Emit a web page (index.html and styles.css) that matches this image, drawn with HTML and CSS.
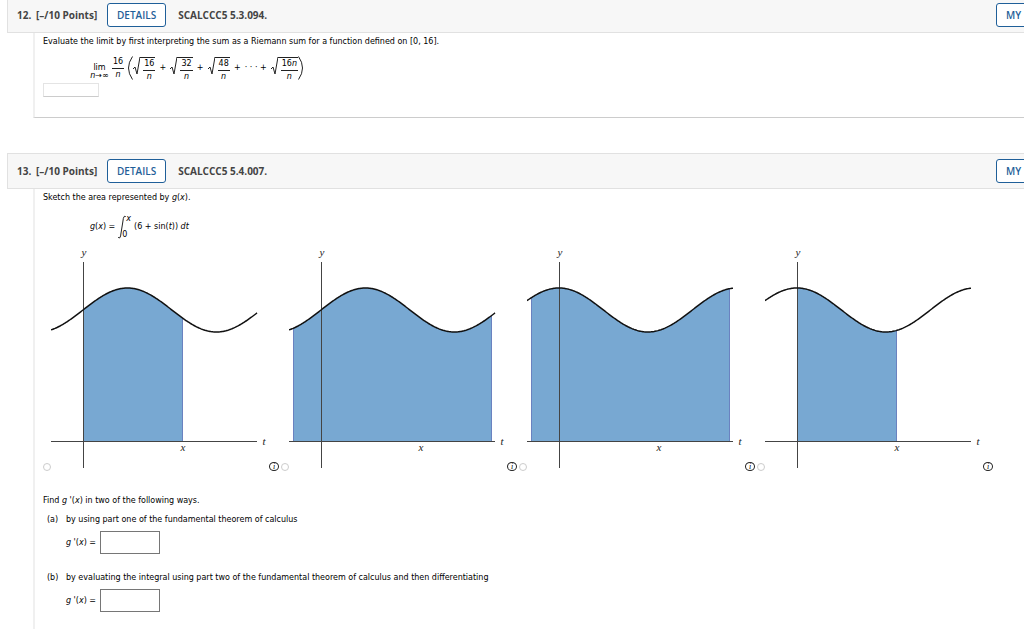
FILE: index.html
```
<!DOCTYPE html>
<html lang="en">
<head>
    <meta charset="UTF-8">
    <meta name="viewport" content="width=device-width, initial-scale=1.0">
    <title>Assignment</title>
    <link rel="stylesheet" href="styles.css">
</head>
<body>
    <main class="assignment">
        <!-- Question 12 -->
        <section class="question">
            <header class="question-header">
                <span class="number">12.</span>
                <span class="points">[–/10 Points]</span>
                <button class="btn" type="button">DETAILS</button>
                <span class="source">SCALCCC5 5.3.094.</span>
                <button class="btn notes" type="button">MY</button>
            </header>
            <div class="question-body short">
                <p><label for="q12">Evaluate the limit by first interpreting the sum as a Riemann sum for a function defined on [0, 16].</label></p>
                <div class="formula limit">
                    <span class="lim"><span>lim</span><span class="under"><i>n</i>→∞</span></span>
                    <span class="frac"><span>16</span><i>n</i></span>
                    <svg class="paren" viewBox="0 0 6 24"><path d="M5.5 .5Q-2.5 12 5.5 23.5"/></svg>
                    <span class="root"><svg viewBox="0 0 7 24"><path d="M0 13L2 11L4 18L7 1"/></svg><span class="radicand"><span class="frac"><span>16</span><i>n</i></span></span></span>
                    <span class="op">+</span>
                    <span class="root"><svg viewBox="0 0 7 24"><path d="M0 13L2 11L4 18L7 1"/></svg><span class="radicand"><span class="frac"><span>32</span><i>n</i></span></span></span>
                    <span class="op">+</span>
                    <span class="root"><svg viewBox="0 0 7 24"><path d="M0 13L2 11L4 18L7 1"/></svg><span class="radicand"><span class="frac"><span>48</span><i>n</i></span></span></span>
                    <span class="op">+</span>
                    <span class="dots">· · ·</span>
                    <span class="op">+</span>
                    <span class="root"><svg viewBox="0 0 7 24"><path d="M0 13L2 11L4 18L7 1"/></svg><span class="radicand"><span class="frac"><span>16<i>n</i></span><i>n</i></span></span></span>
                    <svg class="paren" viewBox="0 0 6 24"><path d="M.5 .5Q8.5 12 .5 23.5"/></svg>
                </div>
                <input class="answer-small" id="q12" type="text">
            </div>
        </section>

        <!-- Question 13 -->
        <section class="question">
            <header class="question-header">
                <span class="number">13.</span>
                <span class="points">[–/10 Points]</span>
                <button class="btn" type="button">DETAILS</button>
                <span class="source">SCALCCC5 5.4.007.</span>
                <button class="btn notes" type="button">MY</button>
            </header>
            <div class="question-body">
                <p>Sketch the area represented by <i>g</i>(<i>x</i>).</p>
                <div class="formula integral">
                    <span><i>g</i>(<i>x</i>) =</span>
                    <svg class="int-sign" viewBox="0 0 8 24"><path d="M7.800 2Q7 .5 6.200 1.500Q5.200 2.500 4.800 7L3.200 17Q2.700 22 1.800 22.800Q.9 23.500 .2 22"/></svg>
                    <span class="bounds"><i>x</i><span>0</span></span>
                    <span>(6 + sin(<i>t</i>)) <i>dt</i></span>
                </div>

                <div class="choices">
                    <div class="choice">
                        <input type="radio" name="graph" id="graph1" aria-label="Graph 1">
                        <label for="graph1"><svg class="graph" data-curve="sin" data-from="0" data-to="100" viewBox="0 0 217 225"></svg></label>
                        <button class="info" type="button" aria-label="Enlarge graph 1"><i>i</i></button>
                    </div>
                    <div class="choice">
                        <input type="radio" name="graph" id="graph2" aria-label="Graph 2">
                        <label for="graph2"><svg class="graph" data-curve="sin" data-from="-28" data-to="171" viewBox="0 0 217 225"></svg></label>
                        <button class="info" type="button" aria-label="Enlarge graph 2"><i>i</i></button>
                    </div>
                    <div class="choice">
                        <input type="radio" name="graph" id="graph3" aria-label="Graph 3">
                        <label for="graph3"><svg class="graph" data-curve="cos" data-from="-28" data-to="171" viewBox="0 0 217 225"></svg></label>
                        <button class="info" type="button" aria-label="Enlarge graph 3"><i>i</i></button>
                    </div>
                    <div class="choice">
                        <input type="radio" name="graph" id="graph4" aria-label="Graph 4">
                        <label for="graph4"><svg class="graph" data-curve="cos" data-from="0" data-to="100" viewBox="0 0 217 225"></svg></label>
                        <button class="info" type="button" aria-label="Enlarge graph 4"><i>i</i></button>
                    </div>
                </div>

                <p>Find <i>g</i> '(<i>x</i>) in two of the following ways.</p>
                <div class="part">
                    <span>(a)</span>
                    <div>
                        <p>by using part one of the fundamental theorem of calculus</p>
                        <div class="answer-row">
                            <label for="q13a"><i>g</i> '(<i>x</i>) =</label>
                            <input class="answer" id="q13a" type="text">
                        </div>
                    </div>
                </div>
                <div class="part">
                    <span>(b)</span>
                    <div>
                        <p>by evaluating the integral using part two of the fundamental theorem of calculus and then differentiating</p>
                        <div class="answer-row">
                            <label for="q13b"><i>g</i> '(<i>x</i>) =</label>
                            <input class="answer" id="q13b" type="text">
                        </div>
                    </div>
                </div>
            </div>
        </section>
    </main>

    <script src="graphs.js"></script>
</body>
</html>
```
FILE: styles.css
```
* {
    box-sizing: border-box;
}
body {
    margin: 0;
    background: #fff;
    color: #000;
    font-family: "DejaVu Sans", Verdana, sans-serif;
    font-size: 8px;
    line-height: 12px;
    overflow-x: hidden;
}
p {
    margin: 0;
}
.assignment {
    min-width: 1074px;
    margin-top: -3px;
    padding-left: 7px;
}
.question + .question {
    margin-top: 35px;
}
.question-header {
    display: flex;
    align-items: center;
    height: 36px;
    padding: 0 6px 0 9px;
    background: #f7f7f7;
    border: 1px solid #e1e1e1;
    color: #444;
    font-family: "Open Sans", sans-serif;
    font-size: 10px;
    font-weight: bold;
    white-space: nowrap;
}
.number {
    width: 19px;
}
.points {
    width: 71px;
}
.btn {
    height: 24px;
    padding: 0 9px;
    background: #fff;
    border: 1px solid #1f5f99;
    border-radius: 3px;
    color: #1f5f99;
    font-family: inherit;
    font-size: 10px;
    font-weight: 600;
    cursor: pointer;
}
.source {
    margin-left: 12px;
}
.notes {
    width: 71px;
    margin-left: auto;
    text-align: left;
}
.question-body {
    margin-left: 26px;
    padding: 3px 0 18px 8px;
    border-left: 2px solid #f0f0f0;
}
.question-body.short {
    padding-bottom: 20px;
    border-bottom: 1px solid #ccc;
}

/* Formulas */
.formula {
    display: flex;
    align-items: center;
    height: 24px;
    margin-left: 47px;
}
.formula svg {
    height: 24px;
    fill: none;
    stroke: #222;
    stroke-width: 1;
}
.limit {
    margin-top: 8px;
}
.lim,
.frac {
    display: flex;
    flex-direction: column;
    align-items: center;
    line-height: 8px;
}
.lim {
    align-self: flex-end;
    width: 19px;
    margin-right: 3px;
}
.under {
    white-space: nowrap;
}
.frac > :first-child {
    padding: 0 1px 2px;
    border-bottom: 1px solid #222;
}
.frac > :last-child {
    padding-top: 2px;
}
.paren {
    width: 6px;
    margin-left: 3px;
}
.root {
    display: flex;
}
.root svg {
    width: 7px;
}
.root + .paren {
    margin-left: 0;
}
.radicand {
    height: 23px;
    margin-top: 1px;
    padding: 2px 0 0 3px;
    border-top: 1px solid #222;
}
.op {
    width: 15px;
    text-align: center;
}
.dots {
    width: 11px;
    text-align: center;
    white-space: nowrap;
}
.integral {
    margin-top: 11px;
}
.int-sign {
    width: 8px;
    margin-left: 3px;
}
.bounds {
    display: flex;
    flex-direction: column;
    justify-content: space-between;
    height: 24px;
    margin-right: 3px;
    line-height: 8px;
}
.bounds span {
    margin-left: -4px; /* lower bound tucks under the sign */
}

/* Answer boxes */
.answer-small {
    display: block;
    width: 56px;
    height: 14px;
    margin-top: 3px;
    border: 1px solid #e4e4e4;
    border-bottom-color: #ccc;
}
.answer {
    width: 60px;
    height: 23px;
    border: 1px solid #767676;
}

/* Graph choices */
.choices {
    display: flex;
    margin: 7px 0 24px;
}
.choice {
    display: flex;
    align-items: flex-end;
    width: 238px;
}
.choice input {
    appearance: none;
    width: 8px;
    height: 8px;
    margin: 0;
    border: 1px solid #ccc;
    border-radius: 50%;
    background: #fff;
}
.graph {
    display: block;
    width: 217px;
    height: 225px;
}
.graph text {
    fill: #222;
    font-family: "Liberation Serif", serif;
    font-size: 11px;
    font-style: italic;
    text-anchor: middle;
}
.area {
    fill: #78a8d2;
}
.edge {
    stroke: #6a82c0;
}
.axis {
    stroke: #444;
}
.curve {
    fill: none;
    stroke: #111;
    stroke-width: 1.5;
}
.info {
    width: 10px;
    height: 9px;
    margin-left: 1px;
    padding: 0;
    background: none;
    border: 1px solid #222;
    border-radius: 50%;
    font: 8px/7px "Liberation Serif", serif;
    cursor: pointer;
}

/* Parts (a) and (b) */
.part {
    display: grid;
    grid-template-columns: 19px 1fr;
    margin: 7px 0 18px 4px;
}
.part:last-child {
    margin-bottom: 0;
}
.answer-row {
    display: flex;
    align-items: center;
    gap: 4px;
    margin-top: 5px;
}
```
FILE: graphs.js
```
const ORIGIN = 32;      // y axis position inside the svg
const BASE = 195.5;     // t axis position
const MIDLINE = 64;
const UNIT = 28.3;      // pixels per radian
const AMPLITUDE = 22;
const LEFT = -32;
const RIGHT = 174;

function curvePoints(fn, from, to) {
    const points = [];
    for (let t = from; t <= to; t++) {
        const y = MIDLINE - AMPLITUDE * fn(t / UNIT);
        points.push(`${ORIGIN + t},${y.toFixed(2)}`);
    }
    return points.join(' ');
}

document.querySelectorAll('.graph').forEach((graph) => {
    const fn = Math[graph.dataset.curve];
    const from = Number(graph.dataset.from);
    const to = Number(graph.dataset.to);
    const x1 = ORIGIN + from;
    const x2 = ORIGIN + to;

    graph.innerHTML = `
        <polygon class="area" points="${x1},${BASE} ${curvePoints(fn, from, to)} ${x2},${BASE}"/>
        <path class="edge" d="M${x1 + 0.5} ${BASE}V${MIDLINE - AMPLITUDE * fn(from / UNIT)}M${x2 - 0.5} ${BASE}V${MIDLINE - AMPLITUDE * fn(to / UNIT)}"/>
        <path class="axis" d="M0 ${BASE}H206M${ORIGIN + 0.5} 16V222"/>
        <polyline class="curve" points="${curvePoints(fn, LEFT, RIGHT)}"/>
        <text x="33" y="10">y</text>
        <text x="132" y="205">x</text>
        <text x="213" y="199">t</text>`;
});
```
